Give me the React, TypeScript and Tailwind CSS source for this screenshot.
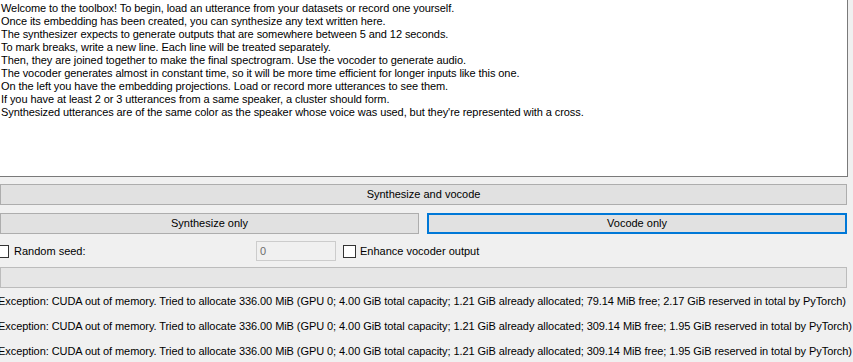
const intro = [
  'Welcome to the toolbox! To begin, load an utterance from your datasets or record one yourself.',
  'Once its embedding has been created, you can synthesize any text written here.',
  'The synthesizer expects to generate outputs that are somewhere between 5 and 12 seconds.',
  'To mark breaks, write a new line. Each line will be treated separately.',
  'Then, they are joined together to make the final spectrogram. Use the vocoder to generate audio.',
  'The vocoder generates almost in constant time, so it will be more time efficient for longer inputs like this one.',
  'On the left you have the embedding projections. Load or record more utterances to see them.',
  'If you have at least 2 or 3 utterances from a same speaker, a cluster should form.',
  "Synthesized utterances are of the same color as the speaker whose voice was used, but they're represented with a cross.",
]

const logs = [
  'Exception: CUDA out of memory. Tried to allocate 336.00 MiB (GPU 0; 4.00 GiB total capacity; 1.21 GiB already allocated; 79.14 MiB free; 2.17 GiB reserved in total by PyTorch)',
  'Exception: CUDA out of memory. Tried to allocate 336.00 MiB (GPU 0; 4.00 GiB total capacity; 1.21 GiB already allocated; 309.14 MiB free; 1.95 GiB reserved in total by PyTorch)',
  'Exception: CUDA out of memory. Tried to allocate 336.00 MiB (GPU 0; 4.00 GiB total capacity; 1.21 GiB already allocated; 309.14 MiB free; 1.95 GiB reserved in total by PyTorch)',
]

function Checkbox() {
  return <span className="block w-[13px] h-[13px] border border-[#333333] bg-white shrink-0" />
}

export default function App() {
  return (
    <div
      className="w-[853px] h-[362px] bg-[#f0f0f0] overflow-hidden flex flex-col text-[11px] text-black"
      style={{ fontFamily: '"Liberation Sans", Arial, sans-serif' }}
    >
      {/* Text to synthesize */}
      <div className="w-[848px] h-[177px] shrink-0 bg-white border-r border-b border-[#7a7a7a] pl-[1px] pt-[2px] leading-[13px] tracking-[-0.08px]">
        {intro.map((line, i) => (
          <div key={i} className="whitespace-nowrap">{line}</div>
        ))}
      </div>

      <button className="mt-[7px] w-[847px] h-[21px] shrink-0 bg-[#e1e1e1] border border-[#adadad] flex items-center justify-center">
        Synthesize and vocode
      </button>

      <div className="mt-[8px] flex gap-[8px] shrink-0">
        <button className="w-[419px] h-[21px] bg-[#e1e1e1] border border-[#adadad] flex items-center justify-center">
          Synthesize only
        </button>
        <button className="w-[420px] h-[21px] bg-[#e1e1e1] border-2 border-[#0078d7] flex items-center justify-center">
          Vocode only
        </button>
      </div>

      <div className="mt-[7px] h-[20px] flex items-center shrink-0">
        <div className="ml-[-4px] flex items-center gap-[5px] w-[260px]">
          <Checkbox />
          <span>Random seed:</span>
        </div>
        <div className="w-[80px] h-[20px] border border-[#cccccc] bg-[#f0f0f0] pl-[3px] flex items-center text-[#6d6d6d]">
          0
        </div>
        <div className="ml-[7px] flex items-center gap-[4px]">
          <Checkbox />
          <span>Enhance vocoder output</span>
        </div>
      </div>

      <div className="mt-[6px] w-[847px] h-[21px] shrink-0 bg-[#e6e6e6] border border-[#bcbcbc]" />

      <div className="mt-[1px] ml-[-2px] flex flex-col leading-[25px] tracking-[-0.07px]">
        {logs.map((line, i) => (
          <div key={i} className="whitespace-nowrap">{line}</div>
        ))}
      </div>
    </div>
  )
}
